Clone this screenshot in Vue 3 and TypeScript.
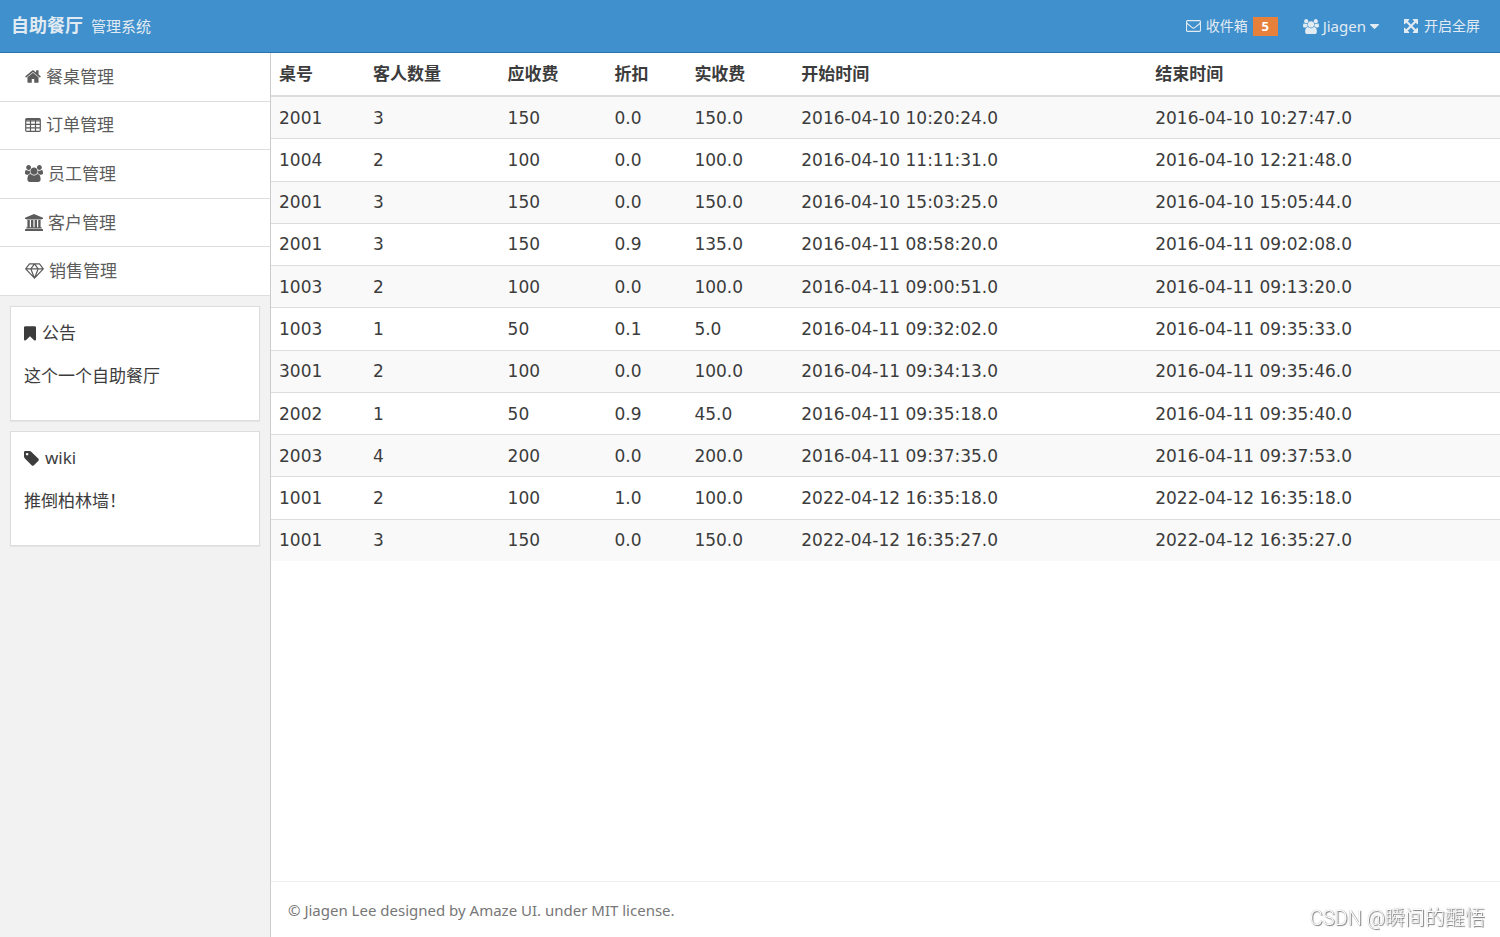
<script setup lang="ts">
interface Icon {
  box: string
  width: number
  height: number
  path: string
  stroke?: boolean
}

interface Order {
  table: string
  guests: number
  due: number
  discount: string
  paid: string
  start: string
  end: string
}

const groupPath =
  'M593 896q-162 5-265 128h-134q-82 0-138-40.5t-56-118.5q0-353 124-353 6 0 43.5 21t97.5 42.5 119 21.5q67 0 133-23-5 37-5 66 0 139 81 256zm1071 637q0 120-73 189.5t-194 69.5h-874q-121 0-194-69.5t-73-189.5q0-53 3.5-103.5t14-109 26.5-108.5 43-97.5 62-81 85.5-53.5 111.5-20q10 0 43 21.5t73 48 107 48 135 21.5 135-21.5 107-48 73-48 43-21.5q61 0 111.5 20t85.5 53.5 62 81 43 97.5 26.5 108.5 14 109 3.5 103.5zm-1024-1277q0 106-75 181t-181 75-181-75-75-181 75-181 181-75 181 75 75 181zm704 384q0 159-112.5 271.5t-271.5 112.5-271.5-112.5-112.5-271.5 112.5-271.5 271.5-112.5 271.5 112.5 112.5 271.5zm576 225q0 78-56 118.5t-138 40.5h-134q-103-123-265-128 81-117 81-256 0-29-5-66 66 23 133 23 59 0 119-21.5t97.5-42.5 43.5-21q124 0 124 353zm-128-609q0 106-75 181t-181 75-181-75-75-181 75-181 181-75 181 75 75 181z'

const menu: { label: string; icon: Icon }[] = [
  {
    label: '餐桌管理',
    icon: {
      box: '64 128 1664 1536', width: 16, height: 15,
      path: 'M1472 992v480q0 26-19 45t-45 19h-384v-384h-256v384h-384q-26 0-45-19t-19-45v-480q0-1 .5-3t.5-3l575-474 575 474q1 2 1 6zm223-69l-62 74q-8 9-21 11h-3q-13 0-21-7l-692-577-692 577q-12 8-24 7-13-2-21-11l-62-74q-8-10-7-23.5t11-21.5l719-599q32-26 76-26t76 26l244 204v-195q0-14 9-23t23-9h192q14 0 23 9t9 23v408l219 182q10 8 11 21.5t-7 23.5z',
    },
  },
  {
    label: '订单管理',
    icon: {
      box: '0 0 16 14', width: 16, height: 14, stroke: true,
      path: 'M1.8.7h12.4q1.1 0 1.1 1.1v10.4q0 1.1-1.1 1.1H1.800q-1.100 0-1.100-1.100V1.800q0-1.100 1.100-1.100zM1 3h14M1 6.300h14M1 9.800h14M5.500 2v11M10.500 2v11M1 1.700h14',
    },
  },
  { label: '员工管理', icon: { box: '0 0 1920 1792', width: 18, height: 17, path: groupPath } },
  {
    label: '客户管理',
    icon: {
      box: '0 0 1920 1792', width: 18, height: 17,
      path: 'M960 0l960 384v128h-128q0 26-20.5 45t-48.5 19h-1526q-28 0-48.5-19t-20.5-45h-128v-128zm-704 640h256v768h128v-768h256v768h128v-768h256v768h128v-768h256v768h59q28 0 48.5 19t20.5 45v64h-1664v-64q0-26 20.5-45t48.5-19h59v-768zm1595 960q28 0 48.5 19t20.5 45v128h-1920v-128q0-26 20.5-45t48.5-19h1782z',
    },
  },
  {
    label: '销售管理',
    icon: {
      box: '0 0 19 16', width: 19, height: 16, stroke: true,
      path: 'M4.500.8h10l3.800 5-8.800 9.400L.7 5.800zM.7 5.800h17.600M9.500.8L5.800 5.800l3.700 9.400 3.700-9.400z',
    },
  },
]

const notes: { title: string; body: string; icon: Icon }[] = [
  {
    title: '公告',
    body: '这个一个自助餐厅',
    icon: {
      box: '256 128 1280 1536', width: 12, height: 15,
      path: 'M1420 128q23 0 44 9 33 13 52.5 41t19.5 62v1289q0 34-19.5 62t-52.5 41q-19 8-44 8-48 0-83-32l-441-424-441 424q-36 33-83 33-23 0-44-9-33-13-52.5-41t-19.5-62v-1289q0-34 19.5-62t52.5-41q21-9 44-9h1048z',
    },
  },
  {
    title: 'wiki',
    body: '推倒柏林墙！',
    icon: {
      box: '128 128 1536 1536', width: 15, height: 15,
      path: 'M576 448q0-53-37.5-90.5t-90.5-37.5-90.5 37.5-37.5 90.5 37.5 90.5 90.5 37.5 90.5-37.5 37.5-90.5zm1067 576q0 53-37 90l-491 492q-39 37-91 37-53 0-90-37l-715-716q-38-37-64.5-101t-26.5-117v-416q0-52 38-90t90-38h416q53 0 117 26.5t102 64.5l715 714q37 39 37 91z',
    },
  },
]

const columns = ['桌号', '客人数量', '应收费', '折扣', '实收费', '开始时间', '结束时间']

const orders: Order[] = [
  { table: '2001', guests: 3, due: 150, discount: '0.0', paid: '150.0', start: '2016-04-10 10:20:24.0', end: '2016-04-10 10:27:47.0' },
  { table: '1004', guests: 2, due: 100, discount: '0.0', paid: '100.0', start: '2016-04-10 11:11:31.0', end: '2016-04-10 12:21:48.0' },
  { table: '2001', guests: 3, due: 150, discount: '0.0', paid: '150.0', start: '2016-04-10 15:03:25.0', end: '2016-04-10 15:05:44.0' },
  { table: '2001', guests: 3, due: 150, discount: '0.9', paid: '135.0', start: '2016-04-11 08:58:20.0', end: '2016-04-11 09:02:08.0' },
  { table: '1003', guests: 2, due: 100, discount: '0.0', paid: '100.0', start: '2016-04-11 09:00:51.0', end: '2016-04-11 09:13:20.0' },
  { table: '1003', guests: 1, due: 50, discount: '0.1', paid: '5.0', start: '2016-04-11 09:32:02.0', end: '2016-04-11 09:35:33.0' },
  { table: '3001', guests: 2, due: 100, discount: '0.0', paid: '100.0', start: '2016-04-11 09:34:13.0', end: '2016-04-11 09:35:46.0' },
  { table: '2002', guests: 1, due: 50, discount: '0.9', paid: '45.0', start: '2016-04-11 09:35:18.0', end: '2016-04-11 09:35:40.0' },
  { table: '2003', guests: 4, due: 200, discount: '0.0', paid: '200.0', start: '2016-04-11 09:37:35.0', end: '2016-04-11 09:37:53.0' },
  { table: '1001', guests: 2, due: 100, discount: '1.0', paid: '100.0', start: '2022-04-12 16:35:18.0', end: '2022-04-12 16:35:18.0' },
  { table: '1001', guests: 3, due: 150, discount: '0.0', paid: '150.0', start: '2022-04-12 16:35:27.0', end: '2022-04-12 16:35:27.0' },
]
</script>

<template>
  <div class="admin">
    <header class="topbar">
      <h1 class="brand"><strong>自助餐厅</strong> <small>管理系统</small></h1>
      <nav class="tools" aria-label="工具栏">
        <a class="tool" href="#inbox">
          <svg class="icon" viewBox="0 256 1792 1408" width="15" height="12" aria-hidden="true">
            <path d="M1664 1504v-768q-32 36-69 66-268 206-426 338-51 43-83 67t-86.5 48.5-102.5 24.5h-2q-48 0-102.5-24.5t-86.5-48.5-83-67q-158-132-426-338-37-30-69-66v768q0 13 9.5 22.5t22.5 9.5h1472q13 0 22.5-9.5t9.5-22.5zm0-1051v-24.5l-.5-13-3-12.5-5.5-9-9-7.5-14-2.5h-1472q-13 0-22.5 9.5t-9.5 22.5q0 168 147 284 193 152 401 317 6 5 35 29.5t46 37.5 44.500 31.500 50.500 27.500 43 9h2q20 0 43-9t50.500-27.500 44.500-31.500 46-37.500 35-29.500q208-165 401-317 54-43 100.500-115.500t46.500-131.500zm128-37v1088q0 66-47 113t-113 47h-1472q-66 0-113-47t-47-113v-1088q0-66 47-113t113-47h1472q66 0 113 47t47 113z" />
          </svg>
          <span>收件箱</span>
          <span class="badge">5</span>
        </a>
        <button class="tool user" type="button" aria-haspopup="true">
          <svg class="icon" viewBox="0 0 1920 1792" width="16" height="15" aria-hidden="true"><path :d="groupPath" /></svg>
          <span>Jiagen</span>
          <svg class="icon" viewBox="0 0 9 5" width="9" height="5" aria-hidden="true"><path d="M.5 0h8q.8.200.3.900L5 4.800q-.5.400-1 0L.2.900Q-.3.200.5 0z" /></svg>
        </button>
        <button class="tool full" type="button">
          <svg class="icon" viewBox="128 128 1536 1536" width="14" height="14" aria-hidden="true">
            <path d="M1411 541l-355 355 355 355 144-144q29-31 70-14 39 17 39 59v448q0 26-19 45t-45 19h-448q-42 0-59-40-17-39 14-69l144-144-355-355-355 355 144 144q31 30 14 69-17 40-59 40h-448q-26 0-45-19t-19-45v-448q0-42 40-59 39-17 69 14l144 144 355-355-355-355-144 144q-19 19-45 19-12 0-24-5-40-17-40-59v-448q0-26 19-45t45-19h448q42 0 59 40 17 39-14 69l-144 144 355 355 355-355-144-144q-31-30-14-69 17-40 59-40h448q26 0 45 19t19 45v448q0 42-39 59-13 5-25 5-26 0-45-19z" />
          </svg>
          <span>开启全屏</span>
        </button>
      </nav>
    </header>

    <div class="body">
      <aside class="sidebar">
        <ul class="menu">
          <li v-for="item in menu" :key="item.label">
            <a href="#">
              <svg
                :class="['icon', { line: item.icon.stroke }]"
                :viewBox="item.icon.box"
                :width="item.icon.width"
                :height="item.icon.height"
                aria-hidden="true"
              ><path :d="item.icon.path" /></svg>
              <span>{{ item.label }}</span>
            </a>
          </li>
        </ul>
        <section v-for="note in notes" :key="note.title" class="note">
          <h2>
            <svg class="icon" :viewBox="note.icon.box" :width="note.icon.width" :height="note.icon.height" aria-hidden="true"><path :d="note.icon.path" /></svg>
            <span>{{ note.title }}</span>
          </h2>
          <p>{{ note.body }}</p>
        </section>
      </aside>

      <main class="content">
        <table class="orders">
          <colgroup>
            <col class="c-table" /><col class="c-guests" /><col class="c-fee" /><col class="c-discount" /><col class="c-fee" /><col class="c-start" /><col />
          </colgroup>
          <thead>
            <tr><th v-for="name in columns" :key="name" scope="col">{{ name }}</th></tr>
          </thead>
          <tbody>
            <tr v-for="(order, i) in orders" :key="i">
              <td>{{ order.table }}</td>
              <td>{{ order.guests }}</td>
              <td>{{ order.due }}</td>
              <td>{{ order.discount }}</td>
              <td>{{ order.paid }}</td>
              <td>{{ order.start }}</td>
              <td>{{ order.end }}</td>
            </tr>
          </tbody>
        </table>
        <footer class="footer">© Jiagen Lee designed by Amaze UI. under MIT license.</footer>
      </main>
    </div>
    <div class="watermark">CSDN @瞬间的醒悟</div>
  </div>
</template>

<style>
body {
  margin: 0;
}
</style>

<style scoped>
.admin {
  display: flex;
  flex-direction: column;
  min-height: 100vh;
  background: #fff;
  color: #3c3c3c;
  font-family: "DejaVu Sans", "Noto Sans CJK SC", sans-serif;
  font-size: 17px;
  line-height: 26px;
}
.admin *,
.admin {
  box-sizing: border-box;
}
.icon {
  display: block;
  flex: none;
  fill: currentColor;
}
.icon.line {
  fill: none;
  stroke: currentColor;
  stroke-width: 1.2;
  stroke-linejoin: round;
}
.topbar {
  display: flex;
  align-items: center;
  justify-content: space-between;
  height: 53px;
  padding: 0 20px 0 11px;
  border-bottom: 1px solid #2a72ab;
  background: #3f90cd;
  color: #e2ebf2;
}
.brand {
  display: flex;
  align-items: baseline;
  gap: 8px;
  margin: 0;
  padding-top: 1px;
  font-size: 15px;
  font-weight: 400;
}
.brand strong {
  font-size: 18px;
  font-weight: 700;
}
.brand small {
  font-size: 15px;
}
.tools {
  display: flex;
  align-items: center;
  gap: 25px;
}
.tool {
  display: flex;
  align-items: center;
  gap: 5px;
  padding: 0;
  border: 0;
  background: none;
  color: #e2ebf2;
  font: inherit;
  font-size: 14px;
  line-height: 24px;
  text-decoration: none;
  cursor: pointer;
}
.user {
  gap: 4px;
  font-family: "Noto Sans", sans-serif;
  font-size: 15px;
}
.full {
  gap: 6px;
}
.badge {
  width: 25px;
  background: #e6803a;
  color: #fff;
  font-family: "Noto Sans", sans-serif;
  font-size: 13px;
  font-weight: 700;
  line-height: 19px;
  text-align: center;
}
.body {
  display: flex;
  flex: 1;
}
.sidebar {
  flex: none;
  width: 271px;
  border-right: 1px solid #ccc;
  background: #f2f2f2;
}
.menu {
  display: grid;
  grid-auto-rows: 1fr;
  min-height: 243px;
  margin: 0 0 10px;
  padding: 0;
  list-style: none;
  background: #fff;
}
.menu li {
  display: flex;
  border-bottom: 1px solid #dedede;
}
.menu a {
  display: flex;
  flex: 1;
  align-items: center;
  gap: 5px;
  padding: 0 25px;
  color: #5c5c5c;
  text-decoration: none;
}
.note {
  min-height: 115px;
  margin: 0 10px 10px;
  padding: 13px;
  border: 1px solid #ddd;
  background: #fff;
  box-shadow: 0 1px 1px rgba(0, 0, 0, 0.05);
}
.note h2 {
  display: flex;
  align-items: center;
  gap: 6px;
  margin: 0 0 17px;
  font-family: "Noto Sans", "Noto Sans CJK SC", sans-serif;
  font-size: 17px;
  font-weight: 400;
}
.note p {
  margin: 0;
}
.content {
  display: flex;
  flex: 1;
  flex-direction: column;
  justify-content: space-between;
  min-width: 0;
}
.orders {
  width: 100%;
  height: 508px;
  border-collapse: collapse;
  table-layout: fixed;
}
.c-table {
  width: 7.65%;
}
.c-guests {
  width: 10.95%;
}
.c-fee {
  width: 8.7%;
}
.c-discount {
  width: 6.5%;
}
.c-start {
  width: 28.8%;
}
.orders th,
.orders td {
  padding: 7px 8px;
  text-align: left;
  vertical-align: middle;
}
.orders th {
  height: 43px;
  border-bottom: 2px solid #ddd;
  font-weight: 700;
}
.orders td {
  border-top: 1px solid #ddd;
}
.orders tbody tr:nth-child(odd) {
  background: #f9f9f9;
}
.footer {
  padding: 15px 17px 14px;
  border-top: 1px solid #eee;
  color: #777;
  font-family: "Noto Sans", sans-serif;
  font-size: 15px;
}
.watermark {
  position: fixed;
  right: 15px;
  bottom: 5px;
  color: #fff;
  font-family: Roboto, "Noto Sans CJK SC", sans-serif;
  font-size: 20px;
  font-weight: 300;
  line-height: 28px;
  text-shadow: 1px 1px 1px #777, 0 0 1px #999;
  pointer-events: none;
}
</style>
